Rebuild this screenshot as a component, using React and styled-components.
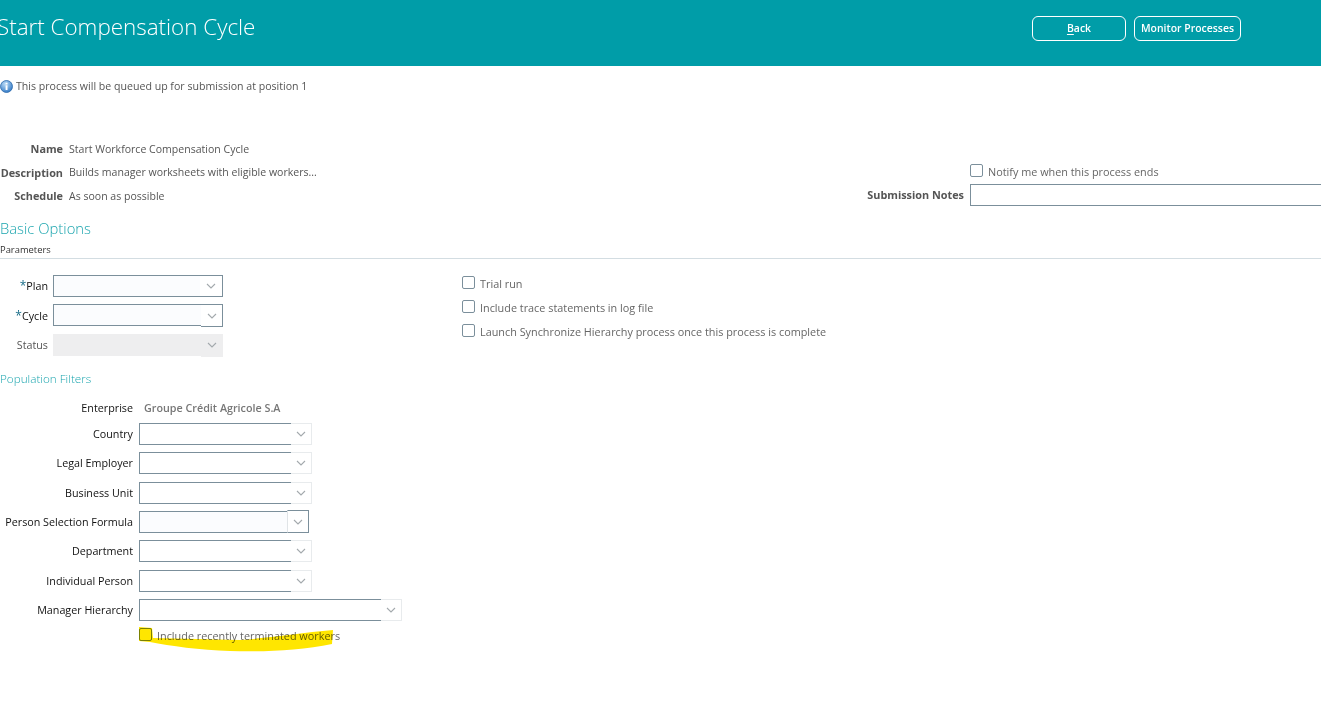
import React from "react";
import styled, { createGlobalStyle } from "styled-components";

const Global = createGlobalStyle`
  html, body { margin: 0; padding: 0; background: #fff; overflow: hidden; }
  body { font-family: "Open Sans", "Noto Sans", "Liberation Sans", sans-serif; font-size: 11px; color: #5f5f5f; }
`;

const Page = styled.div`
  width: 1321px;
  height: 727px;
  overflow: hidden;
  position: relative;
`;
const Header = styled.header`
  height: 66px;
  background: #009da8;
  display: flex;
  align-items: flex-start;
  justify-content: space-between;
  padding-right: 80px;
`;
const Title = styled.h1`
  margin: 10px 0 0 -3px;
  font-size: 22.4px;
  line-height: 34px;
  font-weight: 300;
  color: #fff;
  white-space: nowrap;
`;
const Actions = styled.div`
  display: flex;
  gap: 8px;
  margin-top: 16px;
`;
const HeaderButton = styled.button`
  box-sizing: border-box;
  height: 25px;
  width: ${(p) => p.$width}px;
  padding: 0 0 2px;
  background: transparent;
  border: 1px solid #fff;
  border-radius: 6px;
  color: #fff;
  font: 600 10.45px "Open Sans", sans-serif;
  u { text-underline-offset: 2px; }
`;
const Notice = styled.div`
  display: flex;
  align-items: center;
  gap: 3px;
  margin-top: 13px;
  height: 14px;
  font-size: 10.6px;
  color: #555;
`;
const Summary = styled.section`
  display: grid;
  grid-template-columns: 63px 1fr auto 351px;
  grid-auto-rows: 23.5px;
  column-gap: 6px;
  align-items: center;
  margin-top: 44px;
`;
const SummaryLabel = styled.div`
  text-align: right;
  font-weight: 700;
  font-size: 10.85px;
  color: #555;
  white-space: nowrap;
`;
const NotesLabel = styled(SummaryLabel)`
  margin-bottom: 2px;
`;
const SummaryValue = styled.div`
  font-size: 10.55px;
  color: #555;
  white-space: nowrap;
`;
const NotifyCell = styled.div`
  margin-bottom: 2px;
`;
const NotesInput = styled.div`
  box-sizing: border-box;
  width: 380px;
  height: 22px;
  margin-bottom: 2px;
  border: 1px solid #7b8f9b;
  background: #fff;
`;
const SectionTitle = styled.h2`
  margin: 0;
  font-weight: 300;
  color: #1ba5ae;
  font-size: ${(p) => p.$size}px;
  line-height: 20px;
`;
const BasicTitle = styled(SectionTitle)`
  margin-top: 10px;
`;
const Sub = styled.div`
  font-size: 9.4px;
  line-height: 12px;
  color: #333;
  margin-top: 6px;
  padding-bottom: 2px;
  border-bottom: 1px solid #d3dde2;
`;
const Params = styled.section`
  display: flex;
  margin-top: 16px;
`;
const ParamFields = styled.div`
  width: 462px;
  display: grid;
  grid-template-columns: 48px 170px;
  grid-auto-rows: 22px;
  column-gap: 5px;
  row-gap: 7.5px;
  align-items: center;
  align-content: start;
`;
const FieldLabel = styled.label`
  text-align: right;
  font-size: 10.75px;
  color: ${(p) => (p.$muted ? "#555" : "#111")};
  white-space: nowrap;
  font-weight: 500;
`;
const Req = styled.span`
  color: #1c6f8a;
  font-size: 12px;
`;
const Checks = styled.div`
  display: flex;
  flex-direction: column;
  gap: 10px;
  margin-top: 2px;
`;
const CheckRow = styled.label`
  display: flex;
  align-items: center;
  gap: 5px;
  height: 14px;
  font-size: 10.85px;
  color: #666;
  white-space: nowrap;
`;
const Box = styled.span`
  box-sizing: border-box;
  width: 13px;
  height: 13px;
  border: 1px solid #7b8f9b;
  border-radius: 2px;
  position: relative;
  top: -1px;
  flex: none;
  background: #fff;
`;
const PopTitle = styled(SectionTitle)`
  margin-top: 12px;
`;
const Filters = styled.section`
  display: grid;
  grid-template-columns: 133px auto;
  grid-template-rows: 16px;
  grid-auto-rows: 22px;
  column-gap: 6px;
  row-gap: 7.3px;
  align-items: center;
  justify-items: start;
  margin-top: 12.4px;
`;
const FilterLabel = styled(FieldLabel)`
  justify-self: end;
`;
const EnterpriseValue = styled.div`
  font-size: 10.75px;
  font-weight: 600;
  color: #777;
  margin-left: 5px;
`;
const IncludeCell = styled.div`
  align-self: start;
`;
const SelectRoot = styled.div`
  display: flex;
  width: ${(p) => p.$width}px;
  height: 22px;
  box-sizing: border-box;
  background: ${(p) => (p.$disabled ? "#eeeeef" : "#fbfcfe")};
  border: ${(p) => (p.$kind === "full" ? "1px solid #7b8f9b" : "none")};
`;
const SelectInput = styled.div`
  flex: 1;
  box-sizing: border-box;
  background: ${(p) => (p.$kind === "split" ? "#fff" : "transparent")};
  border: ${(p) => (p.$kind === "split" || p.$kind === "dark" || p.$kind === "cycle" ? "1px solid #7b8f9b" : "none")};
  border-right: none;
`;
const buttonBorder = {
  split: "1px solid #e8ebed",
  dark: "1px solid #7b8f9b",
  cycle: "1px solid #7b8f9b",
};
const buttonMargin = {
  dark: "-1px 0 0",
  cycle: "0 0 -1px",
  disabled: "0 0 -1px",
};
const SelectButton = styled.div`
  width: ${(p) => (p.$kind === "split" ? 21 : 22)}px;
  box-sizing: border-box;
  display: flex;
  align-items: center;
  justify-content: center;
  background: ${(p) => (p.$disabled ? "#eeeeef" : "#fff")};
  border: ${(p) => buttonBorder[p.$kind] || "none"};
  border-left: ${(p) => (p.$kind === "dark" ? "1px solid #e0e4e7" : "none")};
  margin: ${(p) => buttonMargin[p.$kind] || "0"};
`;
const HighlightMark = styled.svg`
  position: absolute;
  left: 0;
  top: 0;
  pointer-events: none;
  mix-blend-mode: multiply;
`;

const Chevron = () => (
  <svg width="10" height="6" viewBox="0 0 10 6" aria-hidden="true">
    <path d="M1 1 L5 5 L9 1" fill="none" stroke="#a3a9ad" strokeWidth="1.1" />
  </svg>
);

const InfoIcon = () => (
  <svg width="13" height="13" viewBox="0 0 13 13" aria-hidden="true">
    <defs>
      <radialGradient id="ig" cx="40%" cy="30%" r="75%">
        <stop offset="0%" stopColor="#bcdcf7" />
        <stop offset="100%" stopColor="#2f77c4" />
      </radialGradient>
    </defs>
    <circle cx="6.5" cy="6.5" r="6" fill="url(#ig)" stroke="#2a68ab" strokeWidth="0.8" />
    <rect x="5.6" y="5.3" width="1.9" height="4.7" fill="#fff" />
    <rect x="5.6" y="2.8" width="1.9" height="1.6" fill="#fff" />
  </svg>
);

const Select = ({ width, kind = "split", disabled }) => (
  <SelectRoot $width={width} $kind={kind} $disabled={disabled}>
    <SelectInput $kind={kind} />
    <SelectButton $kind={kind} $disabled={disabled}>
      <Chevron />
    </SelectButton>
  </SelectRoot>
);

const Check = ({ children }) => (
  <CheckRow>
    <Box />
    {children}
  </CheckRow>
);

const filters = [
  ["Country", 173, "split"],
  ["Legal Employer", 173, "split"],
  ["Business Unit", 173, "split"],
  ["Person Selection Formula", 170, "dark"],
  ["Department", 173, "split"],
  ["Individual Person", 173, "split"],
  ["Manager Hierarchy", 263, "split"],
];

export default function App() {
  return (
    <Page>
      <Global />
      <Header>
        <Title>Start Compensation Cycle</Title>
        <Actions>
          <HeaderButton $width={94}><u>B</u>ack</HeaderButton>
          <HeaderButton $width={107}>Monitor Processes</HeaderButton>
        </Actions>
      </Header>
      <Notice>
        <InfoIcon />
        This process will be queued up for submission at position 1
      </Notice>
      <Summary>
        <SummaryLabel>Name</SummaryLabel>
        <SummaryValue>Start Workforce Compensation Cycle</SummaryValue>
        <span />
        <span />
        <SummaryLabel>Description</SummaryLabel>
        <SummaryValue>Builds manager worksheets with eligible workers...</SummaryValue>
        <span />
        <NotifyCell>
          <Check>Notify me when this process ends</Check>
        </NotifyCell>
        <SummaryLabel>Schedule</SummaryLabel>
        <SummaryValue>As soon as possible</SummaryValue>
        <NotesLabel>Submission Notes</NotesLabel>
        <NotesInput />
      </Summary>
      <BasicTitle $size={14.8}>Basic Options</BasicTitle>
      <Sub>Parameters</Sub>
      <Params>
        <ParamFields>
          <FieldLabel><Req>*</Req>Plan</FieldLabel>
          <Select width={170} kind="full" />
          <FieldLabel><Req>*</Req>Cycle</FieldLabel>
          <Select width={170} kind="cycle" />
          <FieldLabel $muted>Status</FieldLabel>
          <Select width={170} kind="disabled" disabled />
        </ParamFields>
        <Checks>
          <Check>Trial run</Check>
          <Check>Include trace statements in log file</Check>
          <Check>Launch Synchronize Hierarchy process once this process is complete</Check>
        </Checks>
      </Params>
      <PopTitle $size={11.7}>Population Filters</PopTitle>
      <Filters>
        <FilterLabel>Enterprise</FilterLabel>
        <EnterpriseValue>Groupe Crédit Agricole S.A</EnterpriseValue>
        {filters.map(([label, width, kind]) => (
          <React.Fragment key={label}>
            <FilterLabel>{label}</FilterLabel>
            <Select width={width} kind={kind} />
          </React.Fragment>
        ))}
        <span />
        <IncludeCell>
          <Check>Include recently terminated workers</Check>
        </IncludeCell>
      </Filters>
      <HighlightMark width="1321" height="727" viewBox="0 0 1321 727" aria-hidden="true">
        <path
          d="M139 627 L152 628 L153 638 L240 640 C270 638 300 633 333 630 L332 644 C300 651 260 652 230 651 C200 650 170 646 150 642 L139 641 Z"
          fill="#ffe600"
        />
      </HighlightMark>
    </Page>
  );
}
